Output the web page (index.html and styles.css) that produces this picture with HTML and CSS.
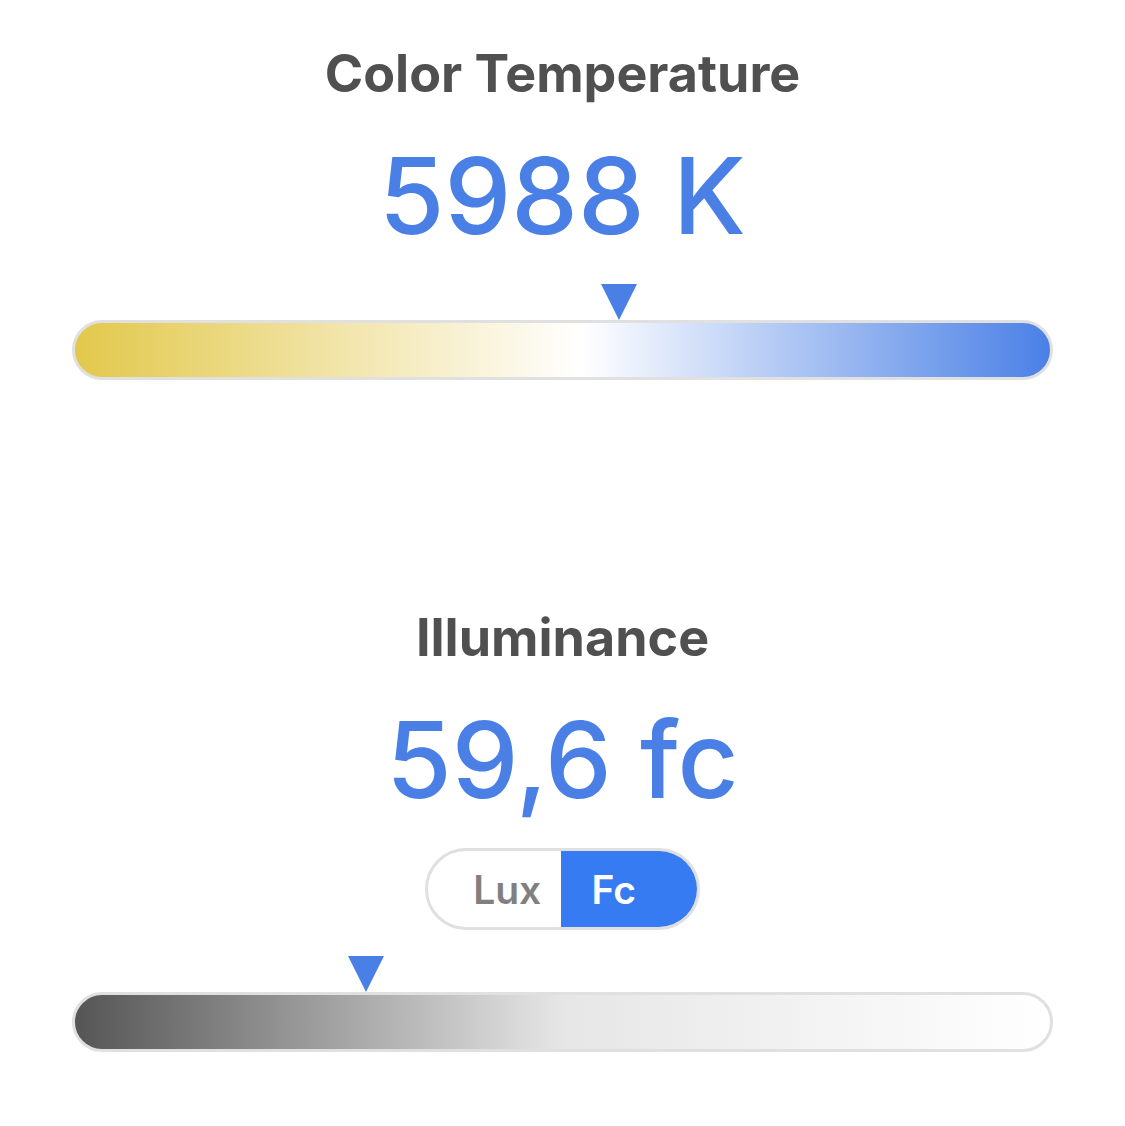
FILE: index.html
```html
<!DOCTYPE html>
<html lang="en">
<head>
  <meta charset="UTF-8" />
  <title>Light Meter</title>
  <link rel="stylesheet" href="styles.css">
</head>
<body>
  <section class="reading reading-temp">
    <h2 class="reading-title">Color Temperature</h2>
    <div class="reading-value">5988 K</div>
    <div class="track track-temp">
      <svg class="marker" style="left: 55.8%" width="36" height="36" viewBox="0 0 36 36">
        <polygon points="0,0 36,0 18,36" fill="#4a80e6" />
      </svg>
    </div>
  </section>

  <section class="reading reading-lux">
    <h2 class="reading-title">Illuminance</h2>
    <div class="reading-value">59,6 fc</div>
    <div class="unit-toggle">
      <button class="unit-btn unit-lux">Lux</button>
      <button class="unit-btn unit-fc active">Fc</button>
    </div>
    <div class="track track-lux">
      <svg class="marker" style="left: 29.8%" width="36" height="36" viewBox="0 0 36 36">
        <polygon points="0,0 36,0 18,36" fill="#4a80e6" />
      </svg>
    </div>
  </section>
</body>
</html>
```

FILE: styles.css
```css
body {
  font-family: 'Inter', 'Noto Sans', sans-serif;
  background-color: #fff;
  margin: 0;
  color: #505050;
}

.reading {
  display: flex;
  flex-direction: column;
  align-items: center;
}

.reading-temp {
  padding-top: 42px;
}

.reading-lux {
  padding-top: 226px;
}

.reading-title {
  margin: 0;
  font-size: 52px;
  line-height: 64px;
  font-weight: 700;
  color: #505050;
}

.reading-value {
  margin-top: 30px;
  font-size: 106px;
  line-height: 120px;
  font-weight: 500;
  color: #4a80e6;
}

.track {
  position: relative;
  align-self: stretch;
  margin: 28px 72px 0;
  height: 60px;
  box-sizing: border-box;
  border: 3px solid #e0e0e0;
  border-radius: 30px;
}

.track-temp {
  margin-top: 64px;
  background: linear-gradient(to right, #e2c84b 0%, #ffffff 52%, #4a80e6 100%);
}

.track-lux {
  margin-top: 62px;
  background: linear-gradient(to right, #555555 0%, #e6e6e6 50%, #ffffff 100%);
}

.marker {
  position: absolute;
  bottom: 100%;
  margin-bottom: 3px;
  transform: translateX(-50%);
  display: block;
}

.unit-toggle {
  display: flex;
  margin-top: 28px;
  width: 275px;
  height: 82px;
  box-sizing: border-box;
  border: 3px solid #e0e0e0;
  border-radius: 41px;
  overflow: hidden;
}

.unit-btn {
  flex: 1;
  border: none;
  background: none;
  font-family: inherit;
  font-size: 39px;
  font-weight: 600;
  color: #808080;
  cursor: pointer;
}

.unit-lux {
  padding: 0 0 0 26px;
}

.unit-fc {
  padding: 0 30px 0 0;
}

.unit-btn.active {
  background-color: #377bf3;
  color: #fff;
}
```
